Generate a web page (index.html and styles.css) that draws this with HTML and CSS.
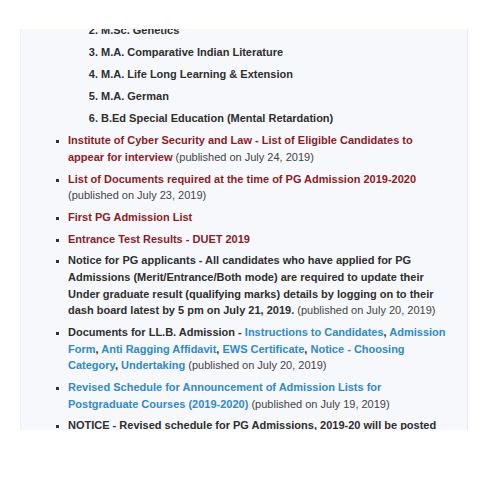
FILE: index.html
```html
<!DOCTYPE html>
<html>
<head>
<meta charset="utf-8">
<link rel="stylesheet" href="styles.css">
</head>
<body>
<div class="panel">
  <ul class="notices">
    <li class="with-sub">
      <ol class="courses" start="2">
        <li>M.Sc. Genetics</li>
        <li>M.A. Comparative Indian Literature</li>
        <li>M.A. Life Long Learning &amp; Extension</li>
        <li>M.A. German</li>
        <li>B.Ed Special Education (Mental Retardation)</li>
      </ol>
    </li>
    <li><a class="red" href="#">Institute of Cyber Security and Law - List of Eligible Candidates to appear for interview</a> <span class="pub">(published on July 24, 2019)</span></li>
    <li><a class="red" href="#">List of Documents required at the time of PG Admission 2019-2020</a> <span class="pub">(published on July 23, 2019)</span></li>
    <li><a class="red" href="#">First PG Admission List</a></li>
    <li><a class="red" href="#">Entrance Test Results - DUET 2019</a></li>
    <li>Notice for PG applicants - All candidates who have applied for PG Admissions (Merit/Entrance/Both mode) are required to update their Under graduate result (qualifying marks) details by logging on to their dash board latest by 5 pm on July 21, 2019. <span class="pub">(published on July 20, 2019)</span></li>
    <li>Documents for LL.B. Admission - <a class="blue" href="#">Instructions to Candidates</a>, <a class="blue" href="#">Admission Form</a>, <a class="blue" href="#">Anti Ragging Affidavit</a>, <a class="blue" href="#">EWS Certificate</a>, <a class="blue" href="#">Notice - Choosing Category</a>, <a class="blue" href="#">Undertaking</a> <span class="pub">(published on July 20, 2019)</span></li>
    <li><a class="blue" href="#">Revised Schedule for Announcement of Admission Lists for Postgraduate Courses (2019-2020)</a> <span class="pub">(published on July 19, 2019)</span></li>
    <li>NOTICE - Revised schedule for PG Admissions, 2019-20 will be posted on the website shortly. <span class="pub">(published on July 18, 2019)</span></li>
  </ul>
</div>
</body>
</html>
```
FILE: styles.css
```css
html, body {
  margin: 0;
  padding: 0;
  background: #ffffff;
}
body {
  font-family: "Liberation Sans", Arial, sans-serif;
  font-size: 11px;
  line-height: 16.6px;
  color: #2e2e2e;
}
.panel {
  margin: 29px 0 0 20px;
  width: 446px;
  height: 401px;
  overflow: hidden;
  background: #f7f8fb;
  border-right: 1px solid #e8e9ee;
  border-left: 1px solid #f0f1f4;
}
.notices {
  margin: -7px 0 0 0;
  padding: 0 19px 0 47px;
  list-style: square;
  font-weight: bold;
}
.notices > li {
  margin-bottom: 5.2px;
}
.notices > li::marker {
  font-size: 9px;
  color: #333;
}
.notices > li.with-sub {
  list-style: none;
  margin-bottom: 5.6px;
}
.courses {
  margin: 0;
  padding-left: 33px;
}
.courses > li {
  margin-bottom: 5.4px;
}
.red {
  color: #8e1b1f;
  text-decoration: none;
}
.blue {
  color: #2b8bcc;
  text-decoration: none;
}
.pub {
  font-weight: normal;
  color: #444;
}
```
